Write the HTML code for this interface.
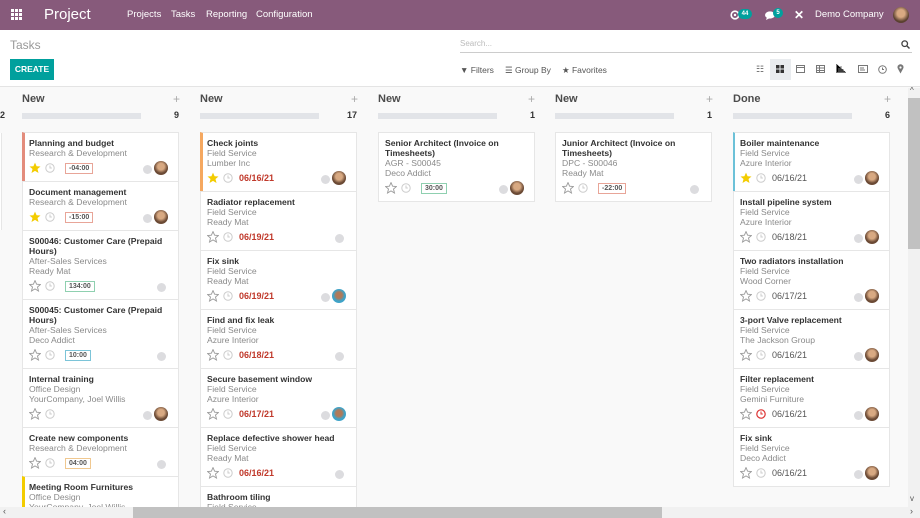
<!DOCTYPE html>
<html style="width:920px;height:518px;overflow:hidden"><head><meta charset="utf-8"><style>
*{box-sizing:border-box;margin:0;padding:0}
body{width:920px;height:518px;overflow:hidden;font-family:"Liberation Sans",sans-serif;background:#f9f9f9;position:relative;color:#4c4c4c}
.nav{position:absolute;left:0;top:0;width:920px;height:30px;background:#875a7b;color:#fff}
.nav .t{position:absolute;top:0;line-height:30px;font-size:9.5px}
.cp{position:absolute;left:0;top:30px;width:920px;height:57px;background:#fff;border-bottom:1px solid #e4e4e4}
.abs{position:absolute}
.clip{position:absolute;left:0;top:88px;width:920px;height:419px;overflow:hidden}
.col{position:absolute;width:157px}
.hd{position:absolute;top:93px;font-size:11px;font-weight:bold;color:#4c4c4c}
.plus{position:absolute;top:92px;font-size:12px;color:#aaa}
.bar{position:absolute;top:113px;height:6px;width:119px;background:#e2e4e8}
.cnt{position:absolute;top:110px;font-size:9px;font-weight:bold;color:#333}
.card{position:relative;background:#fff;border:1px solid #e6e6e6;margin-top:-1px;padding:5px 8px 0 6px}
.card .l{font-size:8.6px;line-height:10px;color:#8a8a8a;white-space:nowrap}
.card .l.b{color:#333;font-weight:bold;white-space:normal}
.ft{height:23px;position:relative}
.ft svg{position:absolute}
.st{left:0;top:4px}
.ck{left:16px;top:5px}
.tag{position:absolute;left:36px;top:5px;font-size:7px;padding:1px 3px;border:1px solid;line-height:7px;font-weight:bold;color:#555}
.dt{position:absolute;left:32px;top:5px;font-size:9px;font-weight:bold;color:#c0392b}
.dt.g{color:#555;font-weight:normal}
.dot{position:absolute;right:18px;top:7px;width:9px;height:9px;border-radius:50%;background:#dcdcdf}
.dot.n{right:4px}
.av{position:absolute;right:2px;top:3px;width:14px;height:14px;border-radius:50%;background:radial-gradient(circle at 50% 40%,#d8a982 0 30%,#6b4a35 60%)}
.av.bl{background:radial-gradient(circle at 50% 45%,#b07a5a 0 30%,#3fa3c8 55%)}
</style></head><body>
<div class="nav">
<svg class="abs" style="left:11px;top:9px" width="11" height="11" viewBox="0 0 11 11" fill="#fff"><rect x="0" y="0" width="3" height="3"/><rect x="4" y="0" width="3" height="3"/><rect x="8" y="0" width="3" height="3"/><rect x="0" y="4" width="3" height="3"/><rect x="4" y="4" width="3" height="3"/><rect x="8" y="4" width="3" height="3"/><rect x="0" y="8" width="3" height="3"/><rect x="4" y="8" width="3" height="3"/><rect x="8" y="8" width="3" height="3"/></svg>
<div class="t" style="left:44px;font-size:15px;">Project</div>
<div class="t" style="left:127px">Projects</div>
<div class="t" style="left:171px">Tasks</div>
<div class="t" style="left:206px">Reporting</div>
<div class="t" style="left:256px">Configuration</div>
<svg class="abs" style="left:730px;top:10px" width="10" height="10" viewBox="0 0 10 10"><circle cx="5" cy="5" r="3.8" fill="none" stroke="#fff" stroke-width="1.6"/><circle cx="5" cy="5" r="1.2" fill="#fff"/></svg>
<div class="abs" style="left:738px;top:9px;width:14px;height:10px;border-radius:5px;background:#00a09d;font-size:6px;line-height:10px;text-align:center;font-weight:bold">44</div>
<svg class="abs" style="left:765px;top:10px" width="11" height="10" viewBox="0 0 11 10"><ellipse cx="5" cy="5" rx="5" ry="3.6" fill="#fff"/><path d="M2 7 L1 10 L5 8z" fill="#fff"/></svg>
<div class="abs" style="left:773px;top:8px;width:10px;height:10px;border-radius:5px;background:#00a09d;font-size:6px;line-height:10px;text-align:center;font-weight:bold">5</div>
<div class="t" style="left:794px;font-size:12px;font-weight:bold">✕</div>
<div class="t" style="left:815px;font-size:9.5px">Demo Company</div>
<div class="abs" style="left:893px;top:7px;width:16px;height:16px;border-radius:50%;background:radial-gradient(circle at 50% 40%,#d8a982 0 30%,#5a4030 65%)"></div>
</div>
<div class="cp">
<div class="abs" style="left:10px;top:8px;font-size:12px;color:#999">Tasks</div>
<div class="abs" style="left:10px;top:29px;width:44px;height:21px;background:#00a09d;color:#fff;font-size:8.5px;font-weight:bold;text-align:center;line-height:21px">CREATE</div>
<div class="abs" style="left:460px;top:8px;width:452px;height:15px;border-bottom:1px solid #ccc;font-size:8px;color:#bbb;line-height:12px">Search...</div>
<svg class="abs" style="left:901px;top:10px" width="9" height="9" viewBox="0 0 9 9"><circle cx="3.7" cy="3.7" r="2.8" fill="none" stroke="#444" stroke-width="1.3"/><path d="M6 6L8.5 8.5" stroke="#444" stroke-width="1.4"/></svg>
<div class="abs" style="left:460px;top:35px;font-size:8.5px;color:#555">▼ Filters</div>
<div class="abs" style="left:505px;top:35px;font-size:8.5px;color:#555">☰ Group By</div>
<div class="abs" style="left:562px;top:35px;font-size:8.5px;color:#555">★ Favorites</div>
<div class="abs" style="left:770px;top:29px;width:21px;height:21px;background:#e9ecef"></div>
<div class="abs" style="left:756px;top:34px;font-size:9px;color:#666">☷</div>
<svg class="abs" style="left:776px;top:35px" width="8" height="8"><rect x="0" y="0" width="3.5" height="3.5" fill="#333"/><rect x="4.5" y="0" width="3.5" height="3.5" fill="#333"/><rect x="0" y="4.5" width="3.5" height="3.5" fill="#333"/><rect x="4.5" y="4.5" width="3.5" height="3.5" fill="#333"/></svg>
<svg class="abs" style="left:796px;top:34px" width="9" height="9"><rect x="0.5" y="1.5" width="8" height="7" fill="none" stroke="#777"/><path d="M0.5 3.5H8.5" stroke="#777"/></svg>
<svg class="abs" style="left:816px;top:35px" width="9" height="8"><rect x="0.5" y="0.5" width="8" height="7" fill="none" stroke="#777"/><path d="M0.5 3H8.5M0.5 5.5H8.5M3.5 .5V7.5" stroke="#777"/></svg>
<svg class="abs" style="left:836px;top:34px" width="10" height="9"><path d="M0.5 0V8.5H10M3 8V4M5 8V2M7 8V5" stroke="#777"/></svg>
<svg class="abs" style="left:858px;top:35px" width="10" height="8"><rect x="0.5" y="0.5" width="9" height="7" fill="none" stroke="#777"/><path d="M2 3H6M2 5H7" stroke="#777"/></svg>
<svg class="abs" style="left:878px;top:35px" width="9" height="9"><circle cx="4.5" cy="4.5" r="3.8" fill="none" stroke="#777"/><path d="M4.5 2.5V4.5H6" stroke="#777" fill="none"/></svg>
<svg class="abs" style="left:897px;top:34px" width="7" height="10"><path d="M3.5 9.5L0.8 4.5A3 3 0 1 1 6.2 4.5Z" fill="#777"/><circle cx="3.5" cy="3.5" r="1.1" fill="#fff"/></svg>
</div>
<div class="abs" style="left:0;top:133px;width:2px;height:97px;background:#fff;border-right:1px solid #e6e6e6"></div>
<div class="cnt" style="left:0">2</div>
<div class="hd" style="left:22px">New</div><div class="plus" style="left:173px">+</div><div class="bar" style="left:22px"></div><div class="cnt" style="left:174px">9</div>
<div class="hd" style="left:200px">New</div><div class="plus" style="left:351px">+</div><div class="bar" style="left:200px"></div><div class="cnt" style="left:347px">17</div>
<div class="hd" style="left:378px">New</div><div class="plus" style="left:528px">+</div><div class="bar" style="left:378px"></div><div class="cnt" style="left:530px">1</div>
<div class="hd" style="left:555px">New</div><div class="plus" style="left:706px">+</div><div class="bar" style="left:555px"></div><div class="cnt" style="left:707px">1</div>
<div class="hd" style="left:733px">Done</div><div class="plus" style="left:884px">+</div><div class="bar" style="left:733px"></div><div class="cnt" style="left:885px">6</div>

<svg width="0" height="0" style="position:absolute"><defs>
<symbol id="sf" viewBox="0 0 12 12"><path d="M6 .6L7.6 4.2 11.5 4.5 8.5 7 9.5 11 6 8.9 2.5 11 3.5 7 .5 4.5 4.4 4.2Z" fill="#f3cc00"/></symbol>
<symbol id="se" viewBox="0 0 12 12"><path d="M6 .6L7.6 4.2 11.5 4.5 8.5 7 9.5 11 6 8.9 2.5 11 3.5 7 .5 4.5 4.4 4.2Z" fill="none" stroke="#999" stroke-width=".9"/></symbol>
<symbol id="ck" viewBox="0 0 10 10"><circle cx="5" cy="5" r="4.2" fill="none" stroke="#ccc"/><path d="M5 2.5V5H6.8" stroke="#ccc" fill="none"/></symbol>
<symbol id="ckr" viewBox="0 0 10 10"><circle cx="5" cy="5" r="4.2" fill="none" stroke="#d33" stroke-width="1.2"/><path d="M5 2.5V5H6.8" stroke="#d33" fill="none"/></symbol>
</defs></svg>

<div class="clip">
<div class="col" style="left:22px;top:45px">
<div class="card" style="border-left:3px solid #e38c7c;padding-left:4px"><div class="l b">Planning and budget</div><div class="l">Research &amp; Development</div><div class="ft"><svg class="st" width="12" height="12"><use href="#sf"/></svg><svg class="ck" width="10" height="10"><use href="#ck"/></svg><span class="tag" style="border-color:#e8a598">-04:00</span><span class="dot"></span><span class="av"></span></div></div>
<div class="card"><div class="l b">Document management</div><div class="l">Research &amp; Development</div><div class="ft"><svg class="st" width="12" height="12"><use href="#sf"/></svg><svg class="ck" width="10" height="10"><use href="#ck"/></svg><span class="tag" style="border-color:#e8a598">-15:00</span><span class="dot"></span><span class="av"></span></div></div>
<div class="card"><div class="l b">S00046: Customer Care (Prepaid Hours)</div><div class="l">After-Sales Services</div><div class="l">Ready Mat</div><div class="ft"><svg class="st" width="12" height="12"><use href="#se"/></svg><svg class="ck" width="10" height="10"><use href="#ck"/></svg><span class="tag" style="border-color:#8fd0b0">134:00</span><span class="dot n"></span></div></div>
<div class="card"><div class="l b">S00045: Customer Care (Prepaid Hours)</div><div class="l">After-Sales Services</div><div class="l">Deco Addict</div><div class="ft"><svg class="st" width="12" height="12"><use href="#se"/></svg><svg class="ck" width="10" height="10"><use href="#ck"/></svg><span class="tag" style="border-color:#7cc4d8">10:00</span><span class="dot n"></span></div></div>
<div class="card"><div class="l b">Internal training</div><div class="l">Office Design</div><div class="l">YourCompany, Joel Willis</div><div class="ft"><svg class="st" width="12" height="12"><use href="#se"/></svg><svg class="ck" width="10" height="10"><use href="#ck"/></svg><span class="dot"></span><span class="av"></span></div></div>
<div class="card"><div class="l b">Create new components</div><div class="l">Research &amp; Development</div><div class="ft"><svg class="st" width="12" height="12"><use href="#se"/></svg><svg class="ck" width="10" height="10"><use href="#ck"/></svg><span class="tag" style="border-color:#f0c890">04:00</span><span class="dot n"></span></div></div>
<div class="card" style="border-left:3px solid #f3cc00;padding-left:4px"><div class="l b">Meeting Room Furnitures</div><div class="l">Office Design</div><div class="l">YourCompany, Joel Willis</div><div class="ft"></div></div>
</div>

<div class="col" style="left:200px;top:45px">
<div class="card" style="border-left:3px solid #f5a860;padding-left:4px"><div class="l b">Check joints</div><div class="l">Field Service</div><div class="l">Lumber Inc</div><div class="ft"><svg class="st" width="12" height="12"><use href="#sf"/></svg><svg class="ck" width="10" height="10"><use href="#ck"/></svg><span class="dt">06/16/21</span><span class="dot"></span><span class="av"></span></div></div>
<div class="card"><div class="l b">Radiator replacement</div><div class="l">Field Service</div><div class="l">Ready Mat</div><div class="ft"><svg class="st" width="12" height="12"><use href="#se"/></svg><svg class="ck" width="10" height="10"><use href="#ck"/></svg><span class="dt">06/19/21</span><span class="dot n"></span></div></div>
<div class="card"><div class="l b">Fix sink</div><div class="l">Field Service</div><div class="l">Ready Mat</div><div class="ft"><svg class="st" width="12" height="12"><use href="#se"/></svg><svg class="ck" width="10" height="10"><use href="#ck"/></svg><span class="dt">06/19/21</span><span class="dot"></span><span class="av bl"></span></div></div>
<div class="card"><div class="l b">Find and fix leak</div><div class="l">Field Service</div><div class="l">Azure Interior</div><div class="ft"><svg class="st" width="12" height="12"><use href="#se"/></svg><svg class="ck" width="10" height="10"><use href="#ck"/></svg><span class="dt">06/18/21</span><span class="dot n"></span></div></div>
<div class="card"><div class="l b">Secure basement window</div><div class="l">Field Service</div><div class="l">Azure Interior</div><div class="ft"><svg class="st" width="12" height="12"><use href="#se"/></svg><svg class="ck" width="10" height="10"><use href="#ck"/></svg><span class="dt">06/17/21</span><span class="dot"></span><span class="av bl"></span></div></div>
<div class="card"><div class="l b">Replace defective shower head</div><div class="l">Field Service</div><div class="l">Ready Mat</div><div class="ft"><svg class="st" width="12" height="12"><use href="#se"/></svg><svg class="ck" width="10" height="10"><use href="#ck"/></svg><span class="dt">06/16/21</span><span class="dot n"></span></div></div>
<div class="card"><div class="l b">Bathroom tiling</div><div class="l">Field Service</div><div class="l">&nbsp;</div><div class="ft"></div></div>
</div>

<div class="col" style="left:378px;top:45px">
<div class="card"><div class="l b">Senior Architect (Invoice on Timesheets)</div><div class="l">AGR - S00045</div><div class="l">Deco Addict</div><div class="ft"><svg class="st" width="12" height="12"><use href="#se"/></svg><svg class="ck" width="10" height="10"><use href="#ck"/></svg><span class="tag" style="border-color:#8fd0b0">30:00</span><span class="dot"></span><span class="av"></span></div></div>
</div>
<div class="col" style="left:555px;top:45px">
<div class="card"><div class="l b">Junior Architect (Invoice on Timesheets)</div><div class="l">DPC - S00046</div><div class="l">Ready Mat</div><div class="ft"><svg class="st" width="12" height="12"><use href="#se"/></svg><svg class="ck" width="10" height="10"><use href="#ck"/></svg><span class="tag" style="border-color:#e8a598">-22:00</span><span class="dot n"></span></div></div>
</div>

<div class="col" style="left:733px;top:45px">
<div class="card" style="border-left:2px solid #6cc1d8;padding-left:5px"><div class="l b">Boiler maintenance</div><div class="l">Field Service</div><div class="l">Azure Interior</div><div class="ft"><svg class="st" width="12" height="12"><use href="#sf"/></svg><svg class="ck" width="10" height="10"><use href="#ck"/></svg><span class="dt g">06/16/21</span><span class="dot"></span><span class="av"></span></div></div>
<div class="card"><div class="l b">Install pipeline system</div><div class="l">Field Service</div><div class="l">Azure Interior</div><div class="ft"><svg class="st" width="12" height="12"><use href="#se"/></svg><svg class="ck" width="10" height="10"><use href="#ck"/></svg><span class="dt g">06/18/21</span><span class="dot"></span><span class="av"></span></div></div>
<div class="card"><div class="l b">Two radiators installation</div><div class="l">Field Service</div><div class="l">Wood Corner</div><div class="ft"><svg class="st" width="12" height="12"><use href="#se"/></svg><svg class="ck" width="10" height="10"><use href="#ck"/></svg><span class="dt g">06/17/21</span><span class="dot"></span><span class="av"></span></div></div>
<div class="card"><div class="l b">3-port Valve replacement</div><div class="l">Field Service</div><div class="l">The Jackson Group</div><div class="ft"><svg class="st" width="12" height="12"><use href="#se"/></svg><svg class="ck" width="10" height="10"><use href="#ck"/></svg><span class="dt g">06/16/21</span><span class="dot"></span><span class="av"></span></div></div>
<div class="card"><div class="l b">Filter replacement</div><div class="l">Field Service</div><div class="l">Gemini Furniture</div><div class="ft"><svg class="st" width="12" height="12"><use href="#se"/></svg><svg class="ck" width="10" height="10"><use href="#ckr"/></svg><span class="dt g">06/16/21</span><span class="dot"></span><span class="av"></span></div></div>
<div class="card"><div class="l b">Fix sink</div><div class="l">Field Service</div><div class="l">Deco Addict</div><div class="ft"><svg class="st" width="12" height="12"><use href="#se"/></svg><svg class="ck" width="10" height="10"><use href="#ck"/></svg><span class="dt g">06/16/21</span><span class="dot"></span><span class="av"></span></div></div>
</div>
</div>

<div class="abs" style="left:908px;top:88px;width:12px;height:419px;background:#f1f1f1"></div>
<div class="abs" style="left:908px;top:98px;width:12px;height:151px;background:#c1c1c1"></div>
<div class="abs" style="left:910px;top:86px;font-size:8px;color:#555">^</div>
<div class="abs" style="left:910px;top:494px;font-size:8px;color:#555">v</div>
<div class="abs" style="left:0;top:507px;width:920px;height:11px;background:#f1f1f1"></div>
<div class="abs" style="left:133px;top:507px;width:529px;height:11px;background:#c1c1c1"></div>
<div class="abs" style="left:3px;top:506px;font-size:9px;color:#555">‹</div>
<div class="abs" style="left:910px;top:506px;font-size:9px;color:#555">›</div>
</body></html>
